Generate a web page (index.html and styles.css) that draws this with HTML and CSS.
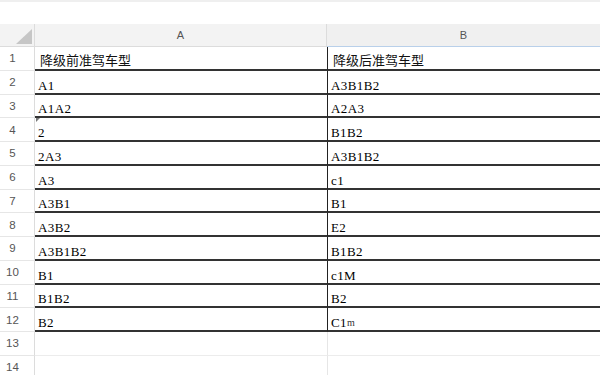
FILE: index.html
```html
<!DOCTYPE html>
<html lang="zh">
<head>
<meta charset="utf-8">
<title>准驾车型</title>
<link rel="stylesheet" href="styles.css">
</head>
<body>
<div class="topbar"></div>
<div class="sheet">
  <div class="hrow">
    <div class="corner"><svg width="16" height="15" viewBox="0 0 16 15"><polygon points="0,15 16,15 16,0" fill="#c6c6c6"/></svg></div>
    <div class="ch cha">A</div>
    <div class="ch chb">B</div>
  </div>
  <div class="row"><div class="rh">1</div><div class="ca zh">降级前准驾车型</div><div class="cb zh">降级后准驾车型</div></div>
  <div class="row"><div class="rh">2</div><div class="ca">A1</div><div class="cb">A3B1B2</div></div>
  <div class="row"><div class="rh">3</div><div class="ca">A1A2</div><div class="cb">A2A3</div></div>
  <div class="row"><div class="rh">4</div><div class="ca flag">2</div><div class="cb">B1B2</div></div>
  <div class="row"><div class="rh">5</div><div class="ca">2A3</div><div class="cb">A3B1B2</div></div>
  <div class="row"><div class="rh">6</div><div class="ca">A3</div><div class="cb">c1</div></div>
  <div class="row"><div class="rh">7</div><div class="ca">A3B1</div><div class="cb">B1</div></div>
  <div class="row"><div class="rh">8</div><div class="ca">A3B2</div><div class="cb">E2</div></div>
  <div class="row"><div class="rh">9</div><div class="ca">A3B1B2</div><div class="cb">B1B2</div></div>
  <div class="row"><div class="rh">10</div><div class="ca">B1</div><div class="cb">c1M</div></div>
  <div class="row"><div class="rh">11</div><div class="ca">B1B2</div><div class="cb">B2</div></div>
  <div class="row"><div class="rh">12</div><div class="ca">B2</div><div class="cb">C1<span class="small">m</span></div></div>
  <div class="row empty"><div class="rh">13</div><div class="ca"></div><div class="cb"></div></div>
  <div class="row empty"><div class="rh">14</div><div class="ca"></div><div class="cb"></div></div>
</div>
</body>
</html>
```
FILE: styles.css
```css
html, body {
  margin: 0;
  padding: 0;
  background: #fff;
  overflow: hidden;
}
body {
  width: 600px;
  height: 375px;
  font-family: "Liberation Sans", Arial, sans-serif;
}
.topbar {
  height: 24px;
  box-sizing: border-box;
  border-top: 2px solid #efefef;
  background: #fff;
}
.sheet {
  display: flex;
  flex-direction: column;
}
.hrow {
  display: flex;
  height: 23px;
  background: #f3f3f3;
  box-sizing: border-box;
}
.corner {
  width: 35px;
  box-sizing: border-box;
  border-right: 1px solid #dcdcdc;
  border-bottom: 1px solid #dcdcdc;
  display: flex;
  justify-content: flex-end;
  align-items: flex-end;
  padding: 0 2px 2px 0;
}
.corner svg { display: block; }
.ch {
  display: flex;
  align-items: center;
  justify-content: center;
  font-size: 11px;
  color: #555;
  box-sizing: border-box;
}
.cha {
  width: 292px;
  border-right: 1px solid #dcdcdc;
  border-bottom: 1px solid #dcdcdc;
}
.chb {
  flex: 1;
  background: #f0f0f0;
  border-bottom: 1px solid #b9d0ea;
}
.row {
  display: flex;
  height: 23.75px;
}
.rh {
  width: 35px;
  box-sizing: border-box;
  border-right: 1px solid #dcdcdc;
  border-bottom: 1px solid #e6e6e6;
  display: flex;
  align-items: center;
  justify-content: center;
  padding-right: 9px;
  font-size: 11.5px;
  color: #555;
}
.ca, .cb {
  box-sizing: border-box;
  display: flex;
  align-items: flex-end;
  padding-left: 3px;
  border-bottom: 2px solid #333;
  font-family: "Liberation Serif", "Times New Roman", serif;
  font-size: 13px;
  letter-spacing: 0.4px;
  line-height: 14px;
  color: #000;
  white-space: nowrap;
}
.ca {
  width: 292px;
  position: relative;
}
.cb {
  flex: 1;
  border-left: 1px solid #222;
}
.zh {
  font-family: "Noto Sans CJK SC", "Noto Sans", sans-serif;
  font-size: 13px;
  letter-spacing: 0;
  line-height: 16px;
  padding-bottom: 1px;
  color: #111;
  padding-left: 5px;
}
.small { font-size: 10px; color: #333; }
.flag::before {
  content: "";
  position: absolute;
  left: 1px;
  top: 0;
  border-top: 4px solid #777;
  border-right: 4px solid transparent;
}
.empty .ca, .empty .cb {
  border-bottom: 1px solid #ececec;
}
.empty .cb { border-left: 1px solid #e6e6e6; }
```
